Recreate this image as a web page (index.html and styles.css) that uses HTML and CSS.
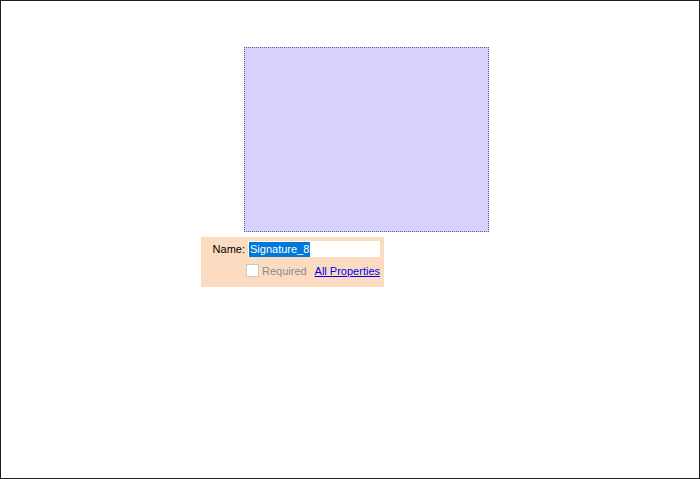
FILE: index.html
```html
<!DOCTYPE html>
<html>
<head>
<meta charset="utf-8">
<link rel="stylesheet" href="styles.css">
</head>
<body>
<div class="frame">
  <div class="canvas">
    <div class="field"></div>
    <div class="panel">
      <div class="row">
        <span class="label">Name:</span>
        <span class="input"><span class="sel">Signature_8</span></span>
      </div>
      <div class="row row2">
        <span class="check"></span>
        <span class="req">Required</span>
        <a class="link" href="#">All Properties</a>
      </div>
    </div>
  </div>
</div>
</body>
</html>
```
FILE: styles.css
```css
html, body {
  margin: 0;
  padding: 0;
  background: #ffffff;
}
.frame {
  width: 700px;
  height: 479px;
  box-sizing: border-box;
  border: 1px solid #1e1e1e;
  background: #ffffff;
  font-family: "Liberation Sans", Arial, sans-serif;
  font-size: 11px;
}
.canvas {
  position: relative;
  width: 100%;
  height: 100%;
}
.field {
  position: absolute;
  left: 243px;
  top: 46px;
  width: 245px;
  height: 185px;
  box-sizing: border-box;
  background: #d8d2ff;
  border: 1px dotted #5c5c8c;
}
.panel {
  position: absolute;
  left: 200px;
  top: 236px;
  width: 183px;
  height: 50px;
  box-sizing: border-box;
  background: #fbdcc0;
  padding: 4px 4px 0 0;
  display: flex;
  flex-direction: column;
  align-items: flex-end;
  gap: 7px;
}
.row {
  display: flex;
  align-items: center;
}
.label {
  color: #000;
  margin-right: 3px;
}
.input {
  width: 132px;
  height: 16px;
  background: #fff;
  display: flex;
  align-items: center;
  padding-left: 1px;
  box-sizing: border-box;
}
.sel {
  background: #0078d7;
  color: #fff;
  padding: 1px;
  line-height: 13px;
}
.row2 {
  width: 134px;
  justify-content: flex-start;
}
.check {
  width: 11px;
  height: 11px;
  background: #fff;
  border: 1px solid #c8c8c8;
  margin-right: 3px;
}
.req {
  color: #8a8a8a;
  font-size: 11px;
}
.link {
  margin-left: auto;
  color: #0000ee;
  text-decoration: underline;
}
```
